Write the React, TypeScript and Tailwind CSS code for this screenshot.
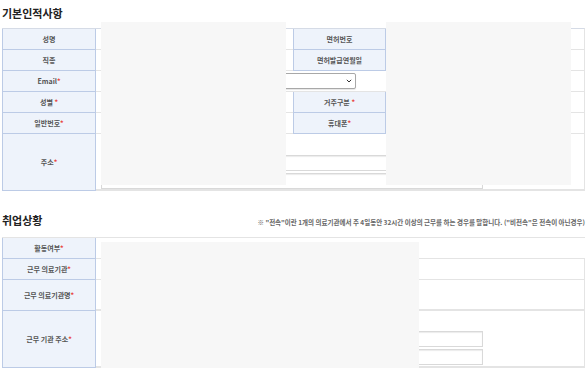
import React from "react";

const Star = () => <span className="text-[#e8413a]">*</span>;

function Label({ children, className = "" }: { children: React.ReactNode; className?: string }) {
  return (
    <div
      className={
        "flex items-center justify-center bg-[#eef3fb] border-l border-b border-r border-[#bccbe6] text-[7px] font-bold text-[#555] " +
        className
      }
    >
      {children}
    </div>
  );
}

function Val({ children, className = "" }: { children?: React.ReactNode; className?: string }) {
  return <div className={"border-b border-[#e4e4e4] " + className}>{children}</div>;
}

function Input({ className = "" }: { className?: string }) {
  return (
    <div className={"h-[16px] border border-[#d9d9d9] bg-white shadow-[inset_0_1px_1px_rgba(0,0,0,0.08)] " + className} />
  );
}

export default function App() {
  return (
    <div className="relative w-[586px] h-[368px] overflow-hidden bg-white font-['Noto_Sans_CJK_KR',sans-serif]">
      {/* Section 1 */}
      <div className="h-[28px] pl-[2px] pt-[5px] text-[11px] font-bold text-[#222] leading-[16px]">기본인적사항</div>
      <div className="ml-[2px] w-[583px] border-t border-[#d5dbe6] border-r border-r-[#e4e4e4]">
        <div className="flex h-[21px]">
          <Label className="w-[94px]">성명</Label>
          <Val className="w-[197px]" />
          <Label className="w-[93px]">면허번호</Label>
          <Val className="flex-1" />
        </div>
        <div className="flex h-[21px]">
          <Label className="w-[94px]">직종</Label>
          <Val className="w-[197px]" />
          <Label className="w-[93px]">면허발급연월일</Label>
          <Val className="flex-1" />
        </div>
        <div className="flex h-[21px]">
          <Label className="w-[94px]">
            Email<Star />
          </Label>
          <Val className="flex-1 flex items-center pl-[5px] gap-[4px]">
            <Input className="w-[80px]" />
            <span className="text-[7px] text-[#555]">@</span>
            <Input className="w-[80px]" />
            <div className="h-[16px] w-[76px] border border-[#a8a8a8] rounded-[2px] bg-white flex items-center justify-end pr-[3px] shadow-[0_1px_1px_rgba(0,0,0,0.1)]">
              <svg width="6" height="4" viewBox="0 0 6 4">
                <path d="M0.8 0.8 L3 3 L5.2 0.8" fill="none" stroke="#333" strokeWidth="1" />
              </svg>
            </div>
          </Val>
        </div>
        <div className="flex h-[21px]">
          <Label className="w-[94px]">
            성별&nbsp;<Star />
          </Label>
          <Val className="w-[197px]" />
          <Label className="w-[93px]">
            거주구분&nbsp;<Star />
          </Label>
          <Val className="flex-1" />
        </div>
        <div className="flex h-[21px]">
          <Label className="w-[94px]">
            일반번호<Star />
          </Label>
          <Val className="w-[197px]" />
          <Label className="w-[93px]">
            휴대폰<Star />
          </Label>
          <Val className="flex-1" />
        </div>
        <div className="flex h-[57px]">
          <Label className="w-[94px]">
            주소<Star />
          </Label>
          <Val className="flex-1 flex flex-col pl-[5px] pt-[3px] gap-[2px] border-b-2">
            <Input className="w-[150px]" />
            <Input className="w-[382px]" />
            <Input className="w-[382px]" />
          </Val>
        </div>
      </div>

      {/* Section 2 */}
      <div className="flex items-end justify-between h-[46px] pl-[2px] pr-[1px] pb-[9px]">
        <div className="text-[11px] font-bold text-[#222] leading-[16px]">취업상황</div>
        <div className="text-[6.5px] font-bold text-[#666] leading-[10px] pb-[1px]">
          ※ "전속"이란 1개의 의료기관에서 주 4일동안 32시간 이상의 근무를 하는 경우를 말합니다. ("비전속"은 전속이 아닌경우)
        </div>
      </div>
      <div className="ml-[2px] w-[583px] border-t border-[#e4e4e4]">
        <div className="flex h-[21px]">
          <Label className="w-[94px] border-t-0">
            활동여부<Star />
          </Label>
          <Val className="flex-1" />
        </div>
        <div className="flex h-[21px]">
          <Label className="w-[94px]">
            근무 의료기관<Star />
          </Label>
          <Val className="flex-1 border-r border-r-[#e4e4e4]" />
        </div>
        <div className="flex h-[31px]">
          <Label className="w-[94px]">
            근무 의료기관명<Star />
          </Label>
          <Val className="flex-1 border-r border-r-[#e4e4e4] border-b-2" />
        </div>
        <div className="flex h-[57px]">
          <Label className="w-[94px]">
            근무 기관 주소<Star />
          </Label>
          <Val className="flex-1 flex flex-col pl-[5px] pt-[2px] gap-[2px] border-r border-r-[#e4e4e4] border-b-2">
            <Input className="w-[150px]" />
            <Input className="w-[382px]" />
            <Input className="w-[382px]" />
          </Val>
        </div>
      </div>

      {/* redaction overlays */}
      <div className="absolute left-[101px] top-[22px] w-[185px] h-[163px] bg-[#f7f7f7]" />
      <div className="absolute left-[386px] top-[22px] w-[185px] h-[163px] bg-[#f7f7f7]" />
      <div className="absolute left-[101px] top-[242px] w-[318px] h-[126px] bg-[#f7f7f7]" />
    </div>
  );
}
